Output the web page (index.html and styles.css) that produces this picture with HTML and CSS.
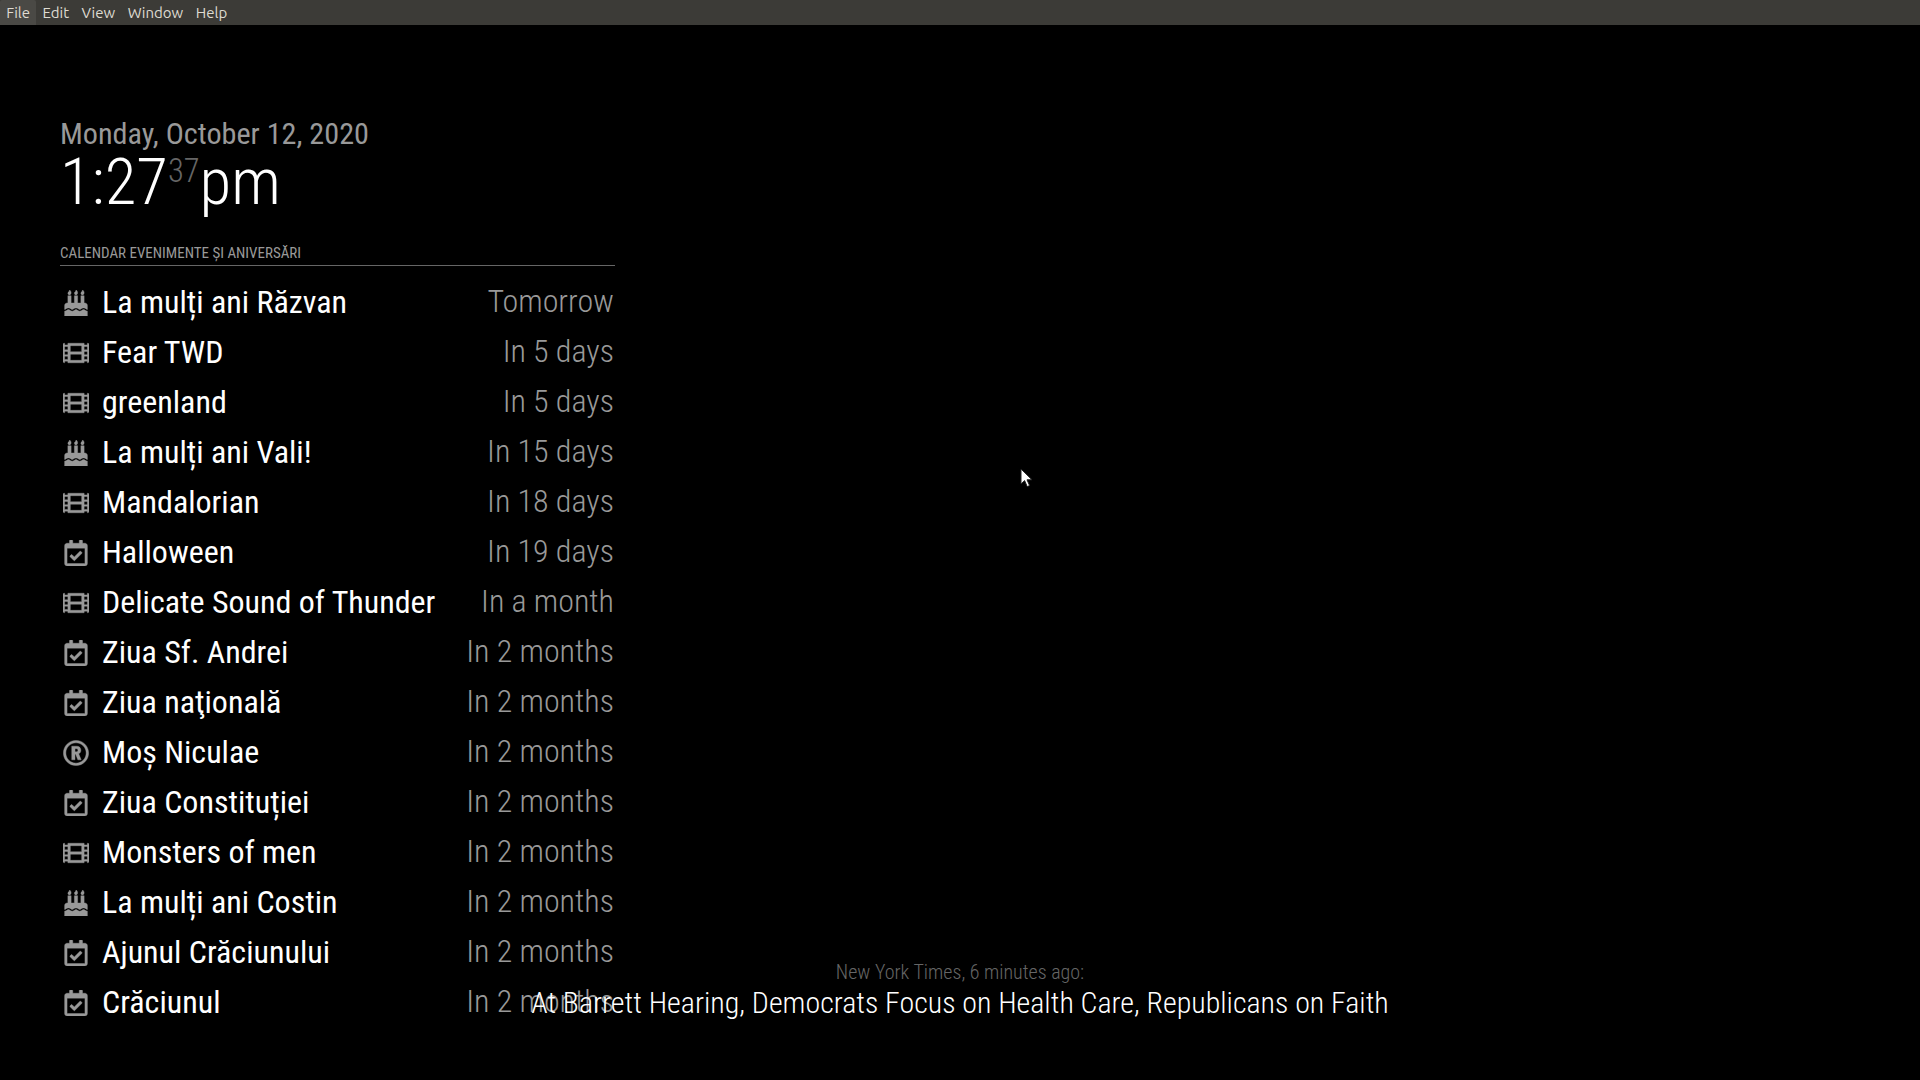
FILE: index.html
```html
<!DOCTYPE html>
<html lang="ro"><head><meta charset="utf-8"><title>MagicMirror</title><link rel="stylesheet" href="styles.css"></head>
<body>
<svg class="defs" aria-hidden="true">
<symbol id="cake" viewBox="0 0 448 512"><path d="M448 384c-28.02 0-31.26-32-74.5-32-43.43 0-46.825 32-74.75 32-27.695 0-31.454-32-74.75-32-42.842 0-47.218 32-74.5 32-28.148 0-31.202-32-74.75-32-43.547 0-46.653 32-74.75 32v-80c0-26.5 21.5-48 48-48h16V112h64v144h64V112h64v144h64V112h64v144h16c26.5 0 48 21.5 48 48v80zm0 128H0v-96c43.356 0 46.767-32 74.75-32 27.951 0 31.253 32 74.75 32 42.833 0 47.22-32 74.5-32 28.148 0 31.201 32 74.75 32 43.355 0 46.767-32 74.75-32 27.951 0 31.253 32 74.5 32v96zM96 96c-17.75 0-32-14.25-32-32 0-31 32-23 32-64 12 0 32 29.5 32 56s-14.25 40-32 40zm128 0c-17.75 0-32-14.25-32-32 0-31 32-23 32-64 12 0 32 29.5 32 56s-14.25 40-32 40zm128 0c-17.75 0-32-14.25-32-32 0-31 32-23 32-64 12 0 32 29.5 32 56s-14.25 40-32 40z"/></symbol>
<symbol id="film" viewBox="0 0 512 512"><path d="M488 64h-8v20c0 6.6-5.4 12-12 12h-40c-6.6 0-12-5.4-12-12V64H96v20c0 6.6-5.4 12-12 12H44c-6.6 0-12-5.4-12-12V64h-8C10.7 64 0 74.7 0 88v336c0 13.3 10.7 24 24 24h8v-20c0-6.6 5.4-12 12-12h40c6.6 0 12 5.4 12 12v20h320v-20c0-6.6 5.4-12 12-12h40c6.6 0 12 5.4 12 12v20h8c13.3 0 24-10.7 24-24V88c0-13.3-10.7-24-24-24zM96 372c0 6.6-5.4 12-12 12H44c-6.6 0-12-5.4-12-12v-40c0-6.6 5.4-12 12-12h40c6.6 0 12 5.4 12 12v40zm0-96c0 6.6-5.4 12-12 12H44c-6.6 0-12-5.4-12-12v-40c0-6.6 5.4-12 12-12h40c6.6 0 12 5.4 12 12v40zm0-96c0 6.6-5.4 12-12 12H44c-6.6 0-12-5.4-12-12v-40c0-6.6 5.4-12 12-12h40c6.6 0 12 5.4 12 12v40zm272 208c0 6.6-5.4 12-12 12H156c-6.6 0-12-5.4-12-12v-96c0-6.6 5.4-12 12-12h200c6.6 0 12 5.4 12 12v96zm0-168c0 6.6-5.4 12-12 12H156c-6.6 0-12-5.4-12-12v-96c0-6.6 5.4-12 12-12h200c6.6 0 12 5.4 12 12v96zm112 152c0 6.6-5.4 12-12 12h-40c-6.6 0-12-5.4-12-12v-40c0-6.6 5.4-12 12-12h40c6.6 0 12 5.4 12 12v40zm0-96c0 6.6-5.4 12-12 12h-40c-6.6 0-12-5.4-12-12v-40c0-6.6 5.4-12 12-12h40c6.6 0 12 5.4 12 12v40zm0-96c0 6.6-5.4 12-12 12h-40c-6.6 0-12-5.4-12-12v-40c0-6.6 5.4-12 12-12h40c6.6 0 12 5.4 12 12v40z"/></symbol>
<symbol id="check" viewBox="0 0 448 512"><path d="M400 64h-48V12c0-6.6-5.4-12-12-12h-40c-6.6 0-12 5.4-12 12v52H160V12c0-6.6-5.4-12-12-12h-40c-6.6 0-12 5.4-12 12v52H48C21.5 64 0 85.5 0 112v352c0 26.5 21.5 48 48 48h352c26.5 0 48-21.5 48-48V112c0-26.5-21.5-48-48-48zm-6 400H54a6 6 0 0 1-6-6V160h352v298a6 6 0 0 1-6 6zm-52.849-200.65L198.842 404.519c-4.705 4.667-12.303 4.637-16.971-.068l-75.091-75.699c-4.667-4.705-4.637-12.303.068-16.971l22.719-22.536c4.705-4.667 12.303-4.637 16.97.069l44.104 44.461 111.072-110.181c4.705-4.667 12.303-4.637 16.971.068l22.536 22.718c4.667 4.705 4.636 12.303-.069 16.97z"/></symbol>
<symbol id="reg" viewBox="0 0 512 512"><path fill-rule="evenodd" d="M504 256c0 136.967-111.033 248-248 248S8 392.967 8 256 119.033 8 256 8s248 111.033 248 248zm-48 0c0-110.549-89.468-200-200-200-110.549 0-200 89.468-200 200 0 110.549 89.468 200 200 200 110.549 0 200-89.468 200-200zM172 122h100c50 0 80 32 80 80 0 34-17 58-44 69l50 119h-66l-42-108h-14v108h-64zm64 50v60h30c20 0 28-12 28-30s-8-30-28-30z"/></symbol>
</svg>
<nav class="menubar">
  <span class="menu active">File</span><span class="menu">Edit</span><span class="menu">View</span><span class="menu">Window</span><span class="menu">Help</span>
</nav>
<main class="region">
  <div class="date">Monday, October 12, 2020</div>
  <div class="time">1:27<sup class="seconds">37</sup>pm</div>
  <header class="module-head">Calendar evenimente și aniversări</header>
  <ul class="events">
    <li class="event"><svg class="ic"><use href="#cake"/></svg><span class="title">La mulți ani Răzvan</span><span class="when">Tomorrow</span></li>
    <li class="event"><svg class="ic"><use href="#film"/></svg><span class="title">Fear TWD</span><span class="when">In 5 days</span></li>
    <li class="event"><svg class="ic"><use href="#film"/></svg><span class="title">greenland</span><span class="when">In 5 days</span></li>
    <li class="event"><svg class="ic"><use href="#cake"/></svg><span class="title">La mulți ani Vali!</span><span class="when">In 15 days</span></li>
    <li class="event"><svg class="ic"><use href="#film"/></svg><span class="title">Mandalorian</span><span class="when">In 18 days</span></li>
    <li class="event"><svg class="ic"><use href="#check"/></svg><span class="title">Halloween</span><span class="when">In 19 days</span></li>
    <li class="event"><svg class="ic"><use href="#film"/></svg><span class="title">Delicate Sound of Thunder</span><span class="when">In a month</span></li>
    <li class="event"><svg class="ic"><use href="#check"/></svg><span class="title">Ziua Sf. Andrei</span><span class="when">In 2 months</span></li>
    <li class="event"><svg class="ic"><use href="#check"/></svg><span class="title">Ziua naţională</span><span class="when">In 2 months</span></li>
    <li class="event"><svg class="ic"><use href="#reg"/></svg><span class="title">Moș Niculae</span><span class="when">In 2 months</span></li>
    <li class="event"><svg class="ic"><use href="#check"/></svg><span class="title">Ziua Constituției</span><span class="when">In 2 months</span></li>
    <li class="event"><svg class="ic"><use href="#film"/></svg><span class="title">Monsters of men</span><span class="when">In 2 months</span></li>
    <li class="event"><svg class="ic"><use href="#cake"/></svg><span class="title">La mulți ani Costin</span><span class="when">In 2 months</span></li>
    <li class="event"><svg class="ic"><use href="#check"/></svg><span class="title">Ajunul Crăciunului</span><span class="when">In 2 months</span></li>
    <li class="event"><svg class="ic"><use href="#check"/></svg><span class="title">Crăciunul</span><span class="when">In 2 months</span></li>
  </ul>
</main>
<aside class="news">
  <div class="news-source">New York Times, 6 minutes ago:</div>
  <div class="news-title">At Barrett Hearing, Democrats Focus on Health Care, Republicans on Faith</div>
</aside>
<svg class="cursor" viewBox="0 0 14 20" aria-hidden="true"><path d="M1 1v15l3.6-3.4 2.6 6 2.4-1-2.6-5.8H12z" fill="#fff" stroke="#222" stroke-width="1"/></svg>
</body></html>
```
FILE: styles.css
```css
html,body{margin:0;height:100%}
body{background:#000;color:#999;font-family:"Roboto Condensed",sans-serif;overflow:hidden;position:relative}
.defs{display:none}
.menubar{display:flex;height:25px;background:#3c3b37;font-family:Ubuntu,"Noto Sans",sans-serif;font-size:15px;line-height:26px;color:#dfdbd2}
.menu{padding:0 6.25px}
.active{background:#4a4945;border-radius:2px 2px 0 0}
.region{width:555px;padding:91px 0 0 60px}
.date{font-size:30.2px;line-height:35px;color:#999;white-space:nowrap}
.time{font-size:65px;line-height:64px;margin-top:-1px;font-weight:300;color:#fff;white-space:nowrap}
.seconds{font-size:32.5px;line-height:1;color:#666;vertical-align:22px}
.module-head{margin-top:32px;padding-bottom:4px;border-bottom:1px solid #666;font-size:15px;line-height:15px;text-transform:uppercase;color:#999}
.events{list-style:none;margin:11px 0 0;padding:0}
.event{display:flex;align-items:center;height:50px}
.ic{width:26px;height:26px;margin:1px 13px 0 3px;fill:#999;stroke:#999;stroke-width:8;flex:none}
.title{flex:1;font-size:32px;line-height:35px;color:#fff;white-space:nowrap}
.when{font-size:32px;line-height:35px;font-weight:300;color:#999;white-space:nowrap;padding-right:1px;margin-bottom:2px}
.news{position:absolute;left:0;right:0;top:960px;text-align:center;font-weight:300}
.news-source{font-size:20px;line-height:25px;color:#666}
.news-title{font-size:29.95px;line-height:35px;color:#fff}
.cursor{position:absolute;left:1020px;top:468px;width:14px;height:20px}
```
